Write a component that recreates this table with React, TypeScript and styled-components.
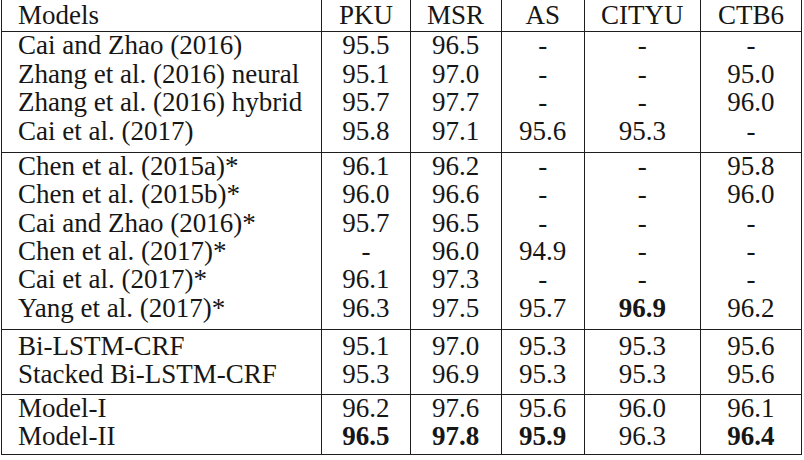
import styled, { createGlobalStyle } from "styled-components"

type Value = string | { best: string }

type Group = {
  pitch: number
  top: number
  bottom: number
  rows: [string, ...Value[]][]
}

const GlobalStyle = createGlobalStyle`
  *, *::before, *::after {
    box-sizing: border-box;
  }

  body {
    margin: 0;
    background: #ffffff;
    overflow: hidden;
  }
`

const RULE = "1px solid #1e1e1e"
const LINE = 26

const columns = [320, 88, 91, 83, 116, 101]
const datasets = ["PKU", "MSR", "AS", "CITYU", "CTB6"]

const best = (v: string): Value => ({ best: v })

const groups: Group[] = [
  {
    pitch: 28.6,
    top: 0,
    bottom: 5.6,
    rows: [
      ["Cai and Zhao (2016)", "95.5", "96.5", "-", "-", "-"],
      ["Zhang et al. (2016) neural", "95.1", "97.0", "-", "-", "95.0"],
      ["Zhang et al. (2016) hybrid", "95.7", "97.7", "-", "-", "96.0"],
      ["Cai et al. (2017)", "95.8", "97.1", "95.6", "95.3", "-"],
    ],
  },
  {
    pitch: 28.35,
    top: 0,
    bottom: 6,
    rows: [
      ["Chen et al. (2015a)*", "96.1", "96.2", "-", "-", "95.8"],
      ["Chen et al. (2015b)*", "96.0", "96.6", "-", "-", "96.0"],
      ["Cai and Zhao (2016)*", "95.7", "96.5", "-", "-", "-"],
      ["Chen et al. (2017)*", "-", "96.0", "94.9", "-", "-"],
      ["Cai et al. (2017)*", "96.1", "97.3", "-", "-", "-"],
      ["Yang et al. (2017)*", "96.3", "97.5", "95.7", best("96.9"), "96.2"],
    ],
  },
  {
    pitch: 28.3,
    top: 3,
    bottom: 4.4,
    rows: [
      ["Bi-LSTM-CRF", "95.1", "97.0", "95.3", "95.3", "95.6"],
      ["Stacked Bi-LSTM-CRF", "95.3", "96.9", "95.3", "95.3", "95.6"],
    ],
  },
  {
    pitch: 28.3,
    top: 0,
    bottom: 2.4,
    rows: [
      ["Model-I", "96.2", "97.6", "95.6", "96.0", "96.1"],
      [
        "Model-II",
        best("96.5"),
        best("97.8"),
        best("95.9"),
        "96.3",
        best("96.4"),
      ],
    ],
  },
]

const Table = styled.table`
  margin-left: 1px;
  width: 801px;
  table-layout: fixed;
  border-collapse: separate;
  border-spacing: 0;
  border-left: ${RULE};
  font-family: "Liberation Serif", "Times New Roman", serif;
  font-size: 27px;
  color: #161616;
`

const Col = styled.col<{ $w: number }>`
  width: ${({ $w }) => $w}px;
`

// header keeps a full-height line box so the glyphs stay inside the page
const HeadCell = styled.th<{ $label?: boolean }>`
  padding: 0 0 1px ${({ $label }) => ($label ? "16px" : "0")};
  line-height: 30px;
  font-weight: 400;
  text-align: ${({ $label }) => ($label ? "left" : "center")};
  vertical-align: top;
  white-space: nowrap;
  border-right: ${RULE};
`

const Row = styled.tr<{
  $pitch: number
  $top: number
  $bottom: number
  $first: boolean
  $end: boolean
}>`
  & > td {
    padding-top: ${({ $top }) => $top}px;
    padding-bottom: ${({ $pitch, $bottom }) => $pitch - LINE + $bottom}px;
    border-top: ${({ $first }) => ($first ? RULE : "none")};
    border-bottom: ${({ $end }) => ($end ? RULE : "none")};
  }
`

const Cell = styled.td<{ $label?: boolean; $best?: boolean }>`
  padding-left: ${({ $label }) => ($label ? "16px" : "0")};
  padding-right: 0;
  line-height: ${LINE}px;
  text-align: ${({ $label }) => ($label ? "left" : "center")};
  vertical-align: top;
  white-space: nowrap;
  font-weight: ${({ $best }) => ($best ? 700 : 400)};
  border-right: ${RULE};
`

function App() {
  return (
    <>
      <GlobalStyle />
      <Table>
        <colgroup>
          {columns.map((w, i) => (
            <Col key={i} $w={w} />
          ))}
        </colgroup>
        <thead>
          <tr>
            <HeadCell $label>Models</HeadCell>
            {datasets.map((d) => (
              <HeadCell key={d}>{d}</HeadCell>
            ))}
          </tr>
        </thead>
        {groups.map((group, g) => (
          <tbody key={g}>
            {group.rows.map(([label, ...values], r) => {
              const first = r === 0
              const last = r === group.rows.length - 1
              return (
                <Row
                  key={label}
                  $pitch={group.pitch}
                  $top={first ? group.top : 0}
                  $bottom={last ? group.bottom : 0}
                  $first={first}
                  $end={last && g === groups.length - 1}
                >
                  <Cell $label>{label}</Cell>
                  {values.map((v, i) =>
                    typeof v === "string" ? (
                      <Cell key={i}>{v}</Cell>
                    ) : (
                      <Cell key={i} $best>
                        {v.best}
                      </Cell>
                    )
                  )}
                </Row>
              )
            })}
          </tbody>
        ))}
      </Table>
    </>
  )
}

export default App
